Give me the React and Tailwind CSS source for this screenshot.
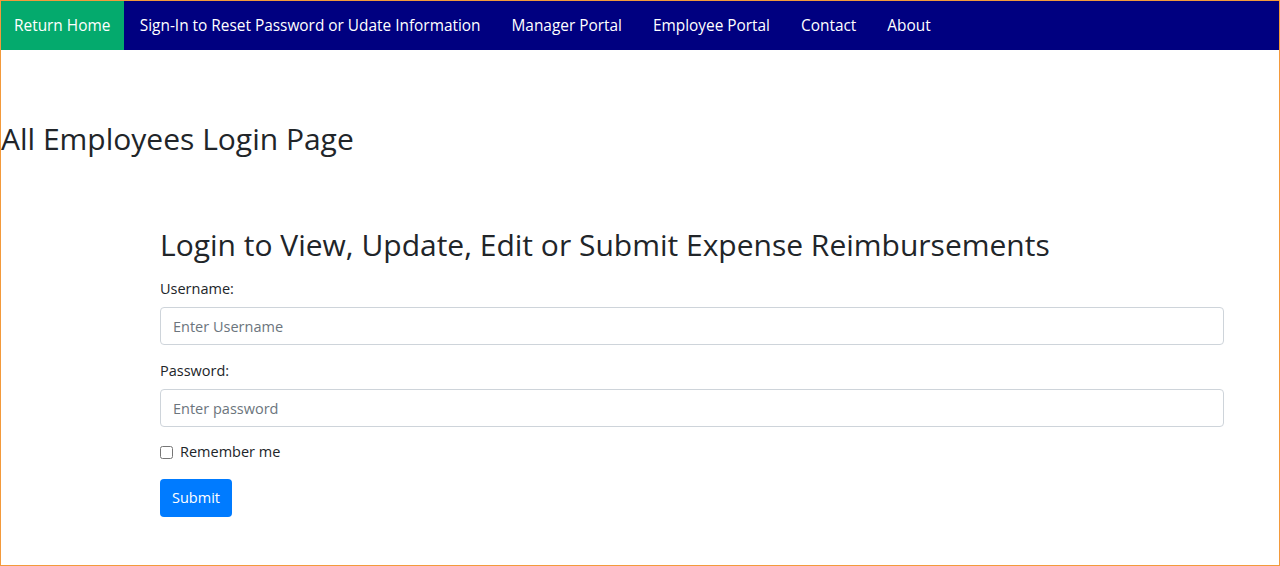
const NAV_LINKS = [
  'Sign-In to Reset Password or Udate Information',
  'Manager Portal',
  'Employee Portal',
  'Contact',
  'About',
];

function Field({ label, placeholder, type = 'text', top }) {
  return (
    <div className={top}>
      <label className="block text-[14.5px] leading-6 text-[#212529]">{label}</label>
      <input
        type={type}
        placeholder={placeholder}
        className="mt-[6px] block h-[38px] w-full rounded border border-[#ced4da] px-3 text-[14.5px] text-[#495057] placeholder:text-[#6c757d] outline-none"
      />
    </div>
  );
}

export default function App() {
  return (
    <div
      className="h-[566px] w-full overflow-hidden border border-[#f39a3b] bg-white"
      style={{ fontFamily: '"Open Sans", "Noto Sans", sans-serif' }}
    >
      <nav className="flex h-[49px] bg-[#000080] text-[15.4px] text-white">
        <a className="flex items-center bg-[#04aa6d] pl-[13px] pr-[14px]">Return Home</a>
        {NAV_LINKS.map((l) => (
          <a key={l} className="flex items-center px-[15.5px]">
            {l}
          </a>
        ))}
      </nav>

      <h2 className="mt-[70px] text-[30px] leading-[38px] font-medium text-[#212529]">
        All Employees Login Page
      </h2>

      <div className="mr-[55px] mt-[68px] pl-[159px]">
        <h2 className="text-[30px] leading-[38px] font-medium text-[#212529]">
          Login to View, Update, Edit or Submit Expense Reimbursements
        </h2>
        <Field top="mt-[13px]" label="Username:" placeholder="Enter Username" />
        <Field top="mt-[14px]" label="Password:" placeholder="Enter password" type="password" />
        <label className="mt-[13px] flex h-6 items-center gap-[7px] text-[14.5px] text-[#212529]">
          <input type="checkbox" className="h-[13px] w-[13px]" />
          Remember me
        </label>
        <button className="mt-[15px] h-[38px] rounded bg-[#007bff] px-3 text-[14.5px] text-white">
          Submit
        </button>
      </div>
    </div>
  );
}
